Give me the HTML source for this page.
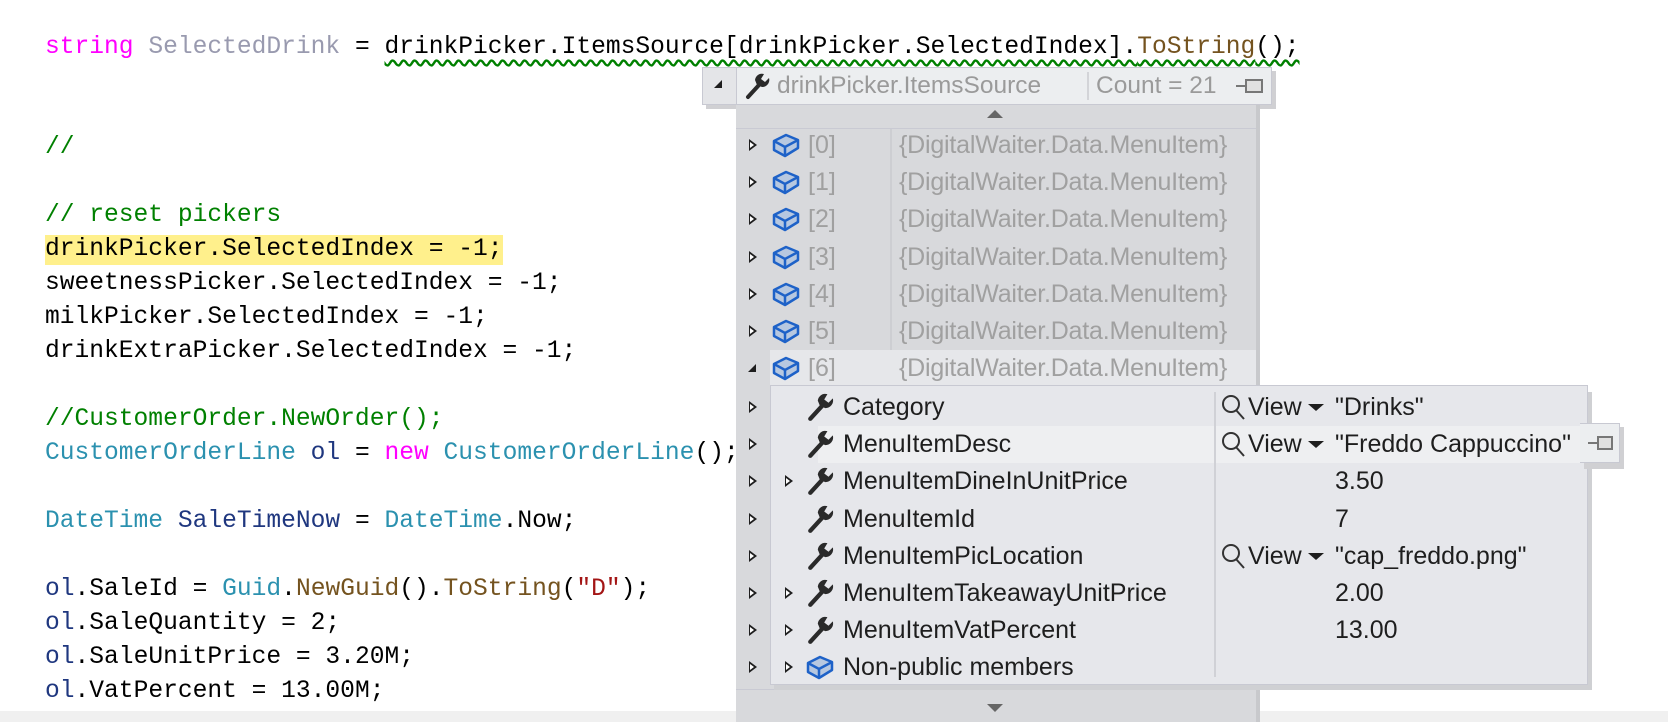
<!DOCTYPE html>
<html><head><meta charset="utf-8"><style>
*{margin:0;padding:0;box-sizing:border-box}
body{width:1668px;height:722px;background:#fff;position:relative;overflow:hidden;font-family:"Liberation Sans",sans-serif}
.c{position:absolute;left:45px;font-family:"Liberation Mono",monospace;font-size:24.6px;white-space:pre;color:#000;line-height:30px}
.k{color:#f0f}.g{color:#008000}.t{color:#2b91af}.v{color:#999aaf}.m{color:#74531f}.s{color:#a31515}.n{color:#1f377f}
.a{position:absolute}
.ui{font-size:25px;white-space:nowrap;line-height:30px}
.tri{position:absolute;width:0;height:0;border-top:6px solid transparent;border-bottom:6px solid transparent;border-left:8px solid #1e1e1e}
.tri:after{content:"";position:absolute;left:-7px;top:-3px;border-top:3px solid transparent;border-bottom:3px solid transparent;border-left:4px solid #fff}
</style></head><body>
<div class="c" style="top:33px"><span class="k">string</span> <span class="v">SelectedDrink</span> = <span style="text-decoration:underline wavy #008000;text-underline-offset:6px">drinkPicker.ItemsSource[drinkPicker.SelectedIndex].<span class="m">ToString</span>();</span></div>
<div class="c g" style="top:133px">//</div>
<div class="c g" style="top:201px">// reset pickers</div>
<div class="c" style="top:235px;background:#fff08c">drinkPicker.SelectedIndex = -1;</div>
<div class="c" style="top:269px">sweetnessPicker.SelectedIndex = -1;</div>
<div class="c" style="top:303px">milkPicker.SelectedIndex = -1;</div>
<div class="c" style="top:337px">drinkExtraPicker.SelectedIndex = -1;</div>
<div class="c g" style="top:405px">//CustomerOrder.NewOrder();</div>
<div class="c" style="top:439px"><span class="t">CustomerOrderLine</span> <span class="n">ol</span> = <span class="k">new</span> <span class="t">CustomerOrderLine</span>();</div>
<div class="c" style="top:507px"><span class="t">DateTime</span> <span class="n">SaleTimeNow</span> = <span class="t">DateTime</span>.Now;</div>
<div class="c" style="top:575px"><span class="n">ol</span>.SaleId = <span class="t">Guid</span>.<span class="m">NewGuid</span>().<span class="m">ToString</span>(<span class="s">"D"</span>);</div>
<div class="c" style="top:609px"><span class="n">ol</span>.SaleQuantity = 2;</div>
<div class="c" style="top:643px"><span class="n">ol</span>.SaleUnitPrice = 3.20M;</div>
<div class="c" style="top:677px"><span class="n">ol</span>.VatPercent = 13.00M;</div>
<div class="a" style="left:0;top:711px;width:1668px;height:11px;background:#f0f0f0"></div>

<!-- header -->
<div class="a" style="left:706px;top:71px;width:570px;height:38px;background:#d0d0d3"></div>
<div class="a" style="left:702px;top:67px;width:570px;height:38px;background:#e4e5e8;border:1px solid #c8c9d2"></div>
<div class="a" style="left:714px;top:80px;border-left:8px solid transparent;border-bottom:8px solid #1e1e1e"></div>
<div class="a" style="left:736px;top:67px;width:536px;height:38px;background:#eceef0;border:1px solid #c8c9d2"></div>
<svg class="a" style="left:744px;top:72px" width="28" height="28" viewBox="0 0 28 28"><path d="M4 25 L15 13" stroke="#2a2a2a" stroke-width="4" stroke-linecap="round"/><path d="M13 13 L11 8 A7 7 0 0 1 20 2 L17 7 L21 10 L25 6 A7 7 0 0 1 18 15 Z" fill="#2a2a2a"/></svg>
<div class="a ui" style="left:777px;top:71px;color:#9a9a9a;font-size:24.5px">drinkPicker.ItemsSource</div>
<div class="a" style="left:1087px;top:72px;width:2px;height:28px;background:#d3d4d8"></div>
<div class="a ui" style="left:1096px;top:71px;color:#9a9a9a;font-size:24.5px">Count = 21</div>
<svg class="a" style="left:1235px;top:76px" width="30" height="20"><path d="M1 10h10M11 3v14M11 4h16v12H11" fill="#e0e0e0" stroke="#777" stroke-width="2"/></svg>
<!-- list panel -->
<div class="a" style="left:736px;top:105px;width:524px;height:617px;background:#d8d9dc;border-right:4px solid #c8c9cc"></div>
<div class="a" style="left:736px;top:105px;width:520px;height:24px;border-bottom:1px solid #c9cad3"></div>
<div class="a" style="left:987px;top:110px;border-left:8px solid transparent;border-right:8px solid transparent;border-bottom:8px solid #666"></div>
<div class="a" style="left:890px;top:129px;width:2px;height:560px;background:#cdced2"></div>
<div class="a" style="left:770px;top:350px;width:486px;height:37px;background:#e6e7ea"></div>
<div class="a" style="left:736px;top:689px;width:520px;height:1px;background:#c9cad3"></div>
<div class="a" style="left:987px;top:704px;border-left:8px solid transparent;border-right:8px solid transparent;border-top:8px solid #666"></div>
<div id="rows"></div>
<!-- sub popup -->
<div class="a" style="left:774px;top:392px;width:818px;height:298px;background:#cfd0d3"></div>
<div class="a" style="left:770px;top:385px;width:818px;height:300px;background:#e6e7eb;border:1px solid #c8c9d2"></div>
<div class="a" style="left:818px;top:426px;width:396px;height:37px;background:#eeeff1"></div>
<div class="a" style="left:1216px;top:426px;width:370px;height:37px;background:#eeeff1"></div>
<div class="a" style="left:1584px;top:427px;width:40px;height:42px;background:#d0d0d3"></div>
<div class="a" style="left:1580px;top:423px;width:40px;height:40px;background:#eceef0;border:1px solid #c8c9d2;border-left:none"></div>
<svg class="a" style="left:1587px;top:434px" width="30" height="20"><path d="M1 9h10M11 2v14M11 3h14v12H11" fill="#e0e0e0" stroke="#777" stroke-width="2"/></svg>
<div class="a" style="left:1214px;top:392px;width:2px;height:285px;background:#d0d1d6"></div>
<div id="sub"></div>
<script>
var W='<path d="M4 25 L15 13" stroke="#2a2a2a" stroke-width="4" stroke-linecap="round"/><path d="M13 13 L11 8 A7 7 0 0 1 20 2 L17 7 L21 10 L25 6 A7 7 0 0 1 18 15 Z" fill="#2a2a2a"/>';
var CU='<path d="M2 10 L14 4 L26 9 L26 17 L13 25 L2 19 Z" fill="#b7c8e0" stroke="#1e62c8" stroke-width="2.5" stroke-linejoin="round"/><path d="M2 10 L13 16 L26 9 M13 16 V25" fill="none" stroke="#1e62c8" stroke-width="2.5"/>';
var R=document.getElementById('rows'),h='';
for(var i=0;i<7;i++){var y=145+i*37.2;
if(i<6)h+='<div class="tri" style="left:749px;top:'+(y-6)+'px"></div>';
else h+='<div class="a" style="left:748px;top:'+(y-4)+'px;border-left:8px solid transparent;border-bottom:8px solid #1e1e1e"></div>';
h+='<svg class="a" style="left:772px;top:'+(y-14)+'px" width="28" height="28" viewBox="0 0 28 28">'+CU+'</svg>';
h+='<div class="a ui" style="left:808px;top:'+(y-15)+'px;color:#a0a0a0">['+i+']</div>';
h+='<div class="a ui" style="left:899px;top:'+(y-15)+'px;color:#a0a0a0;letter-spacing:-0.2px">{DigitalWaiter.Data.MenuItem}</div>';}
R.innerHTML=h;
var S=document.getElementById('sub'),d=[["Category",0,1,'"Drinks"'],["MenuItemDesc",0,1,'"Freddo Cappuccino"'],["MenuItemDineInUnitPrice",1,0,"3.50"],["MenuItemId",0,0,"7"],["MenuItemPicLocation",0,1,'"cap_freddo.png"'],["MenuItemTakeawayUnitPrice",1,0,"2.00"],["MenuItemVatPercent",1,0,"13.00"],["Non-public members",1,0,""]];h='';
for(var j=0;j<8;j++){var y=407+j*37.2,r=d[j];
h+='<div class="tri" style="left:749px;top:'+(y-6)+'px"></div>';
if(r[1])h+='<div class="tri" style="left:785px;top:'+(y-6)+'px"></div>';
if(j<7)h+='<svg class="a" style="left:806px;top:'+(y-15)+'px" width="30" height="30" viewBox="0 0 28 28">'+W+'</svg>';
else h+='<svg class="a" style="left:806px;top:'+(y-14)+'px" width="28" height="28" viewBox="0 0 28 28">'+CU+'</svg>';
h+='<div class="a ui" style="left:843px;top:'+(y-15)+'px;color:#1e1e1e">'+r[0]+'</div>';
if(r[2])h+='<svg class="a" style="left:1220px;top:'+(y-14)+'px" width="28" height="28"><circle cx="11" cy="11" r="8" fill="none" stroke="#333" stroke-width="2"/><path d="M16 17l8 9" stroke="#333" stroke-width="2"/></svg><div class="a ui" style="left:1248px;top:'+(y-15)+'px;color:#1e1e1e">View</div><div class="a" style="left:1308px;top:'+(y-3)+'px;border-left:8px solid transparent;border-right:8px solid transparent;border-top:7px solid #1e1e1e"></div>';
h+='<div class="a ui" style="left:1335px;top:'+(y-15)+'px;color:#1e1e1e">'+r[3]+'</div>';}
S.innerHTML=h;
</script>
</body></html>
